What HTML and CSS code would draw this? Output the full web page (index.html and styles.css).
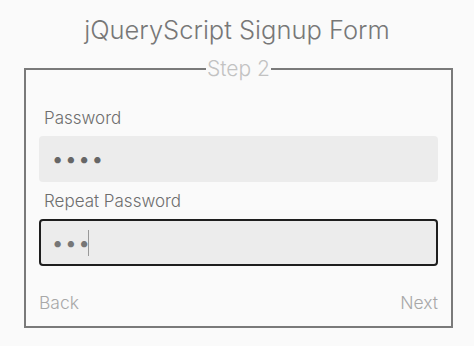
FILE: index.html
```html
<!DOCTYPE html>
<html lang="en">
<head>
<meta charset="utf-8">
<title>jQueryScript Signup Form</title>
<link rel="stylesheet" href="styles.css">
</head>
<body>
<h1 class="title">jQueryScript Signup Form</h1>
<form class="form">
  <fieldset class="step">
    <legend class="step-legend">Step 2</legend>
    <div class="field">
      <label class="field-label" for="pw">Password</label>
      <input class="field-input" id="pw" type="password" value="abcd">
    </div>
    <div class="field">
      <label class="field-label" for="pw2">Repeat Password</label>
      <div class="field-input field-input--focus"><span class="dots">&bull;&bull;&bull;</span><span class="caret"></span></div>
    </div>
    <div class="nav">
      <span class="nav-btn">Back</span>
      <span class="nav-btn">Next</span>
    </div>
  </fieldset>
</form>
</body>
</html>
```
FILE: styles.css
```css
html, body {
  margin: 0;
  padding: 0;
  background: #fafafa;
}
body {
  font-family: Inter, "Noto Sans", sans-serif;
  color: #777;
}
.title {
  margin: 0;
  padding-top: 14px;
  font-size: 25.5px;
  font-weight: 300;
  line-height: 32px;
  text-align: center;
  color: #777;
}
.form {
  margin: 11px 21px 0 24px;
}
.step {
  margin: 0;
  border: 2px solid #7a7a7a;
  padding: 26px 13px 12px 13px;
}
.step-legend {
  margin: 0 auto;
  padding: 0 1px;
  font-size: 21px;
  font-weight: 300;
  color: #c2c2c2;
  line-height: 24px;
}
.field {
  display: flex;
  flex-direction: column;
}
.field-label {
  margin-left: 5px;
  font-size: 17px;
  font-weight: 300;
  line-height: 22px;
  color: #6e6e6e;
  margin-bottom: 7px;
}
.field-input {
  box-sizing: border-box;
  height: 46px;
  width: 100%;
  border: 2px solid #ececec;
  border-radius: 4px;
  background: #ececec;
  padding: 0 11px;
  font-family: Inter, sans-serif;
  font-size: 20px;
  color: #666;
  letter-spacing: 2px;
  margin: 0 0 8px 0;
  outline: none;
}
.field-input--focus {
  display: flex;
  align-items: center;
  height: 47px;
  border-color: #1e1e1e;
  margin-bottom: 0;
}
.dots {
  color: #777;
}
.caret {
  width: 1px;
  height: 26px;
  margin-left: -4px;
  background: #999;
}
.nav {
  display: flex;
  justify-content: space-between;
  margin-top: 26px;
}
.nav-btn {
  font-size: 17.5px;
  font-weight: 300;
  line-height: 22px;
  color: #a8a8a8;
}
```
